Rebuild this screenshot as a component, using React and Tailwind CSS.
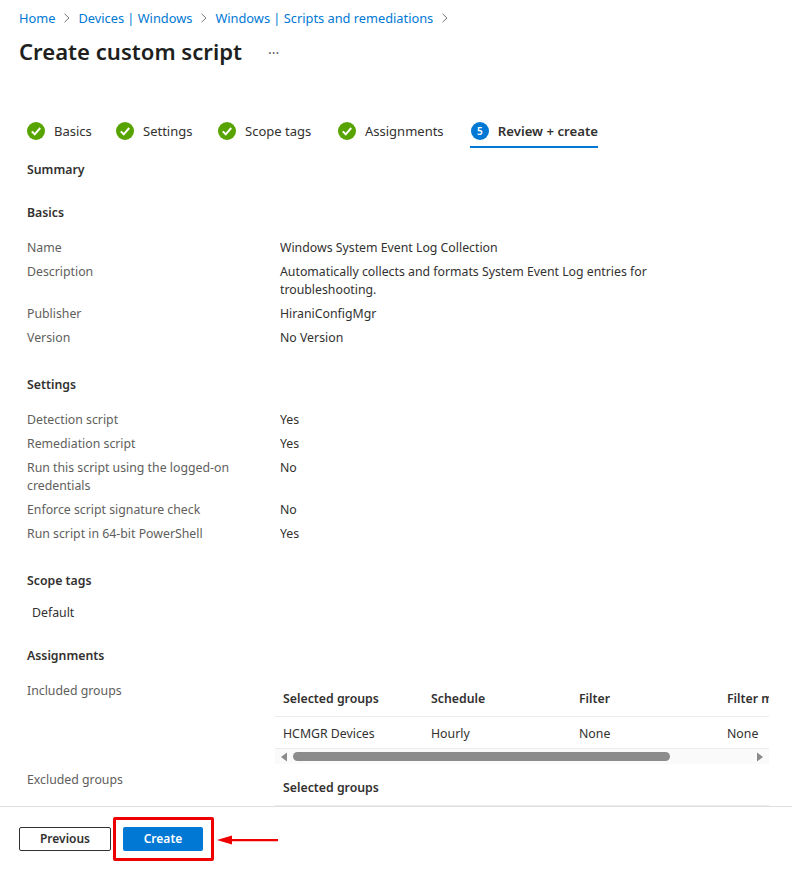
const FONT = "font-['Noto_Sans','Open_Sans',sans-serif]";

function Check() {
  return (
    <svg width="18" height="18" viewBox="0 0 18 18" className="shrink-0">
      <circle cx="9" cy="9" r="9" fill="#57a300" />
      <path d="M4.8 9.4 L7.7 12.3 L13.2 6" fill="none" stroke="#fff" strokeWidth="2" />
    </svg>
  );
}

function Chevron() {
  return (
    <svg width="8" height="10" viewBox="0 0 8 10" className="shrink-0">
      <path d="M1.5 0.8 L6 5 L1.5 9.2" fill="none" stroke="#7a7a7a" strokeWidth="1" />
    </svg>
  );
}

function Step({ label, width }) {
  return (
    <div className="flex items-center gap-[9px] h-[30px]" style={{ width }}>
      <Check />
      <span>{label}</span>
    </div>
  );
}

function Row({ label, children }) {
  return (
    <div className="grid grid-cols-[253px_370px]">
      <div className="text-[#605e5c] w-[225px]">{label}</div>
      <div className="text-[#323130]">{children}</div>
    </div>
  );
}

function Heading({ children, className }) {
  return <div className={"font-semibold text-[#323130] " + className}>{children}</div>;
}

export default function App() {
  return (
    <div className={FONT + " w-[792px] h-[871px] relative bg-white overflow-hidden flex flex-col text-[12.3px] leading-[18px]"}>
      <div className="h-[806px] overflow-hidden shrink-0">
        <nav className="flex items-center pl-[19px] pt-[9px] text-[#0078d4] text-[12.8px] h-[27px]">
          <span>Home</span>
          <span className="mx-[7.5px]"><Chevron /></span>
          <span>Devices | Windows</span>
          <span className="mx-[7.5px]"><Chevron /></span>
          <span>Windows | Scripts and remediations</span>
          <span className="mx-[7.5px]"><Chevron /></span>
        </nav>
        <div className="flex items-center pl-[19px] mt-[6px] h-[36px]">
          <h1 className="text-[22.1px] leading-[36px] font-semibold text-[#201f1e]">Create custom script</h1>
          <span className="ml-[26px] mt-[3px] text-[#605e5c] text-[14px] leading-none">···</span>
        </div>

        <div className="flex items-center pl-[27px] mt-[44px] h-[36px] text-[13px] text-[#323130]">
          <Step label="Basics" width="89px" />
          <Step label="Settings" width="102px" />
          <Step label="Scope tags" width="120px" />
          <Step label="Assignments" width="132px" />
          <div className="relative flex items-center gap-[9px] h-[36px] w-[128px] pl-[1px] font-semibold text-[13.2px] whitespace-nowrap">
            <span className="w-[18px] h-[18px] rounded-full bg-[#0078d4] text-white text-[10px] leading-[18px] text-center">5</span>
            <span>Review + create</span>
            <span className="absolute left-0 right-0 bottom-[1px] h-[2px] bg-[#0078d4]" />
          </div>
        </div>

        <div className="pl-[27px] pr-[23px]">
          <Heading className="mt-[12px]">Summary</Heading>

          <Heading className="mt-[25px]">Basics</Heading>
          <div className="mt-[17px] flex flex-col gap-[6px]">
            <Row label="Name">Windows System Event Log Collection</Row>
            <Row label="Description">Automatically collects and formats System Event Log entries for troubleshooting.</Row>
            <Row label="Publisher">HiraniConfigMgr</Row>
            <Row label="Version">No Version</Row>
          </div>

          <Heading className="mt-[29px]">Settings</Heading>
          <div className="mt-[17px] flex flex-col gap-[6px]">
            <Row label="Detection script">Yes</Row>
            <Row label="Remediation script">Yes</Row>
            <Row label="Run this script using the logged-on credentials">No</Row>
            <Row label="Enforce script signature check">No</Row>
            <Row label="Run script in 64-bit PowerShell">Yes</Row>
          </div>

          <Heading className="mt-[29px]">Scope tags</Heading>
          <div className="mt-[14px] ml-[5px] text-[#323130]">Default</div>

          <Heading className="mt-[25px]">Assignments</Heading>

          <div className="grid grid-cols-[248px_494px] mt-[17px]">
            <div className="text-[#605e5c]">Included groups</div>
            <div className="overflow-hidden">
              <div className="flex items-end pb-[8px] pl-[8px] h-[35px] font-semibold text-[#323130] border-b border-[#edebe9] whitespace-nowrap">
                <span className="w-[148px] shrink-0">Selected groups</span>
                <span className="w-[148px] shrink-0">Schedule</span>
                <span className="w-[148px] shrink-0">Filter</span>
                <span className="w-[148px] shrink-0">Filter mode</span>
              </div>
              <div className="h-[32px] flex items-center pt-[2px] pl-[8px] text-[#323130] border-b border-[#edebe9] whitespace-nowrap">
                <span className="w-[148px] shrink-0">HCMGR Devices</span>
                <span className="w-[148px] shrink-0">Hourly</span>
                <span className="w-[148px] shrink-0">None</span>
                <span className="w-[148px] shrink-0">None</span>
              </div>
              <div className="h-[15px] bg-[#fafafa] flex items-center justify-between px-[5px]">
                <svg width="8" height="10" viewBox="0 0 8 10"><path d="M7 0.5V9.5L1 5Z" fill="#8a8a8a" /></svg>
                <div className="w-[377px] h-[9px] rounded-full bg-[#8c8c8c] ml-[5px] mr-auto" />
                <svg width="8" height="10" viewBox="0 0 8 10"><path d="M1 0.5V9.5L7 5Z" fill="#8a8a8a" /></svg>
              </div>
            </div>
          </div>

          <div className="grid grid-cols-[248px_494px] mt-[5px]">
            <div className="text-[#605e5c] pt-[2px]">Excluded groups</div>
            <div className="h-[37px] pl-[8px] pt-[10px] font-semibold text-[#323130] border-b border-[#edebe9]">Selected groups</div>
          </div>
        </div>
      </div>

      <footer className="border-t border-[#e1dfdd] flex-1 flex items-start gap-[12px] pl-[19px] pt-[20px]">
        <button className="w-[92px] h-[24px] rounded-[2px] border border-[#323130] bg-white text-[#323130] font-semibold text-[12px] leading-[20px]">Previous</button>
        <button className="w-[80px] h-[24px] rounded-[2px] bg-[#0078d4] text-white font-semibold text-[12px] leading-[24px]">Create</button>
      </footer>

      <div className="absolute left-[113px] top-[817px] w-[101px] h-[44px] border-[3px] border-[#ee0000] rounded-[2px]" />
      <svg className="absolute left-[215px] top-[833px]" width="66" height="14" viewBox="0 0 66 14">
        <path d="M2 7 L17 2.5 L17 6 L63 6 L63 8.2 L17 8.2 L17 11.5 Z" fill="#ee0000" />
      </svg>
    </div>
  );
}
